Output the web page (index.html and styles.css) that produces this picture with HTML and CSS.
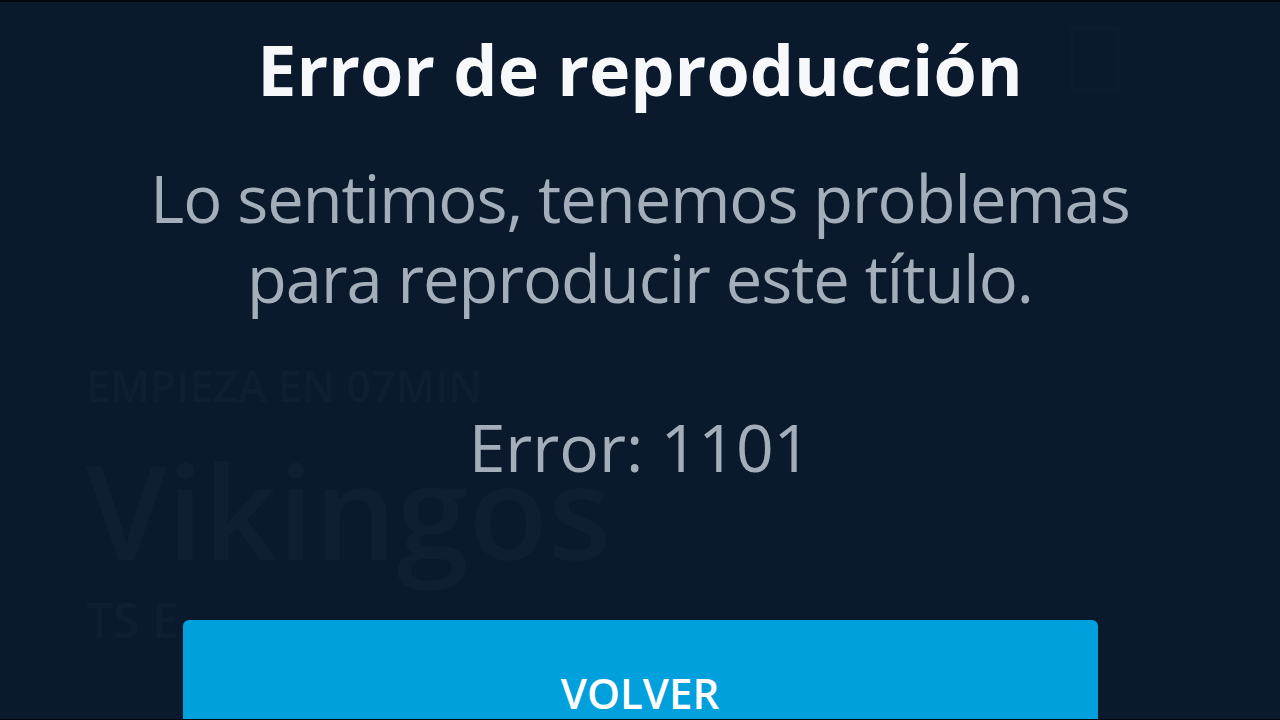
FILE: index.html
```html
<!DOCTYPE html>
<html lang="es">
<head>
    <meta charset="UTF-8">
    <meta name="viewport" content="width=device-width, initial-scale=1.0">
    <title>Error de reproducción</title>
    <link rel="stylesheet" href="styles.css">
</head>
<body>
    <div class="screen">
        <!-- detail page, dimmed behind the dialog -->
        <div class="backdrop">
            <div class="ghost-icon"></div>
            <div class="starts">EMPIEZA EN 07MIN</div>
            <div class="show-title">Vikingos</div>
            <div class="meta">TS E</div>
        </div>

        <div class="dialog">
            <h1 class="title">Error de reproducción</h1>
            <p class="message">Lo sentimos, tenemos problemas<br>para reproducir este título.</p>
            <p class="code">Error: 1101</p>
            <button class="back-btn">VOLVER</button>
        </div>
    </div>
</body>
</html>
```

FILE: styles.css
```css
* {
    box-sizing: border-box;
}

body {
    margin: 0;
    background-color: #000;
    font-family: "Open Sans", "Noto Sans", sans-serif;
}

.screen {
    position: relative;
    width: 1280px;
    height: 720px;
    overflow: hidden;
    background-color: #0a1a2c;
    border-top: 2px solid #03080e;
    border-bottom: 1px solid #03080e;
}

.backdrop {
    position: absolute;
    inset: 0;
    padding: 354px 0 0 86px;
    color: #0f1e30;
}

.ghost-icon {
    position: absolute;
    top: 24px;
    left: 1070px;
    width: 50px;
    height: 66px;
    border: 4px solid #0c1c2e;
    border-radius: 4px;
}

.starts {
    font-size: 43px;
    font-weight: 600;
    line-height: 60px;
}

.show-title {
    margin-top: 24px;
    font-size: 130px;
    font-weight: 600;
    line-height: 140px;
}

.meta {
    margin-top: 10px;
    font-size: 48px;
    font-weight: 600;
    line-height: 60px;
}

.dialog {
    position: relative;
    display: flex;
    flex-direction: column;
    align-items: center;
    padding-top: 22px;
    text-align: center;
}

.title {
    margin: 0;
    font-size: 70px;
    font-weight: 700;
    line-height: 90px;
    color: #f6f8fa;
}

.message {
    margin: 44px 0 0;
    font-size: 65px;
    line-height: 80px;
    letter-spacing: -1px;
    color: #a4aebb;
}

.code {
    margin: 88px 0 0;
    font-size: 66px;
    line-height: 80px;
    color: #a4aebb;
}

.back-btn {
    margin-top: 134px;
    width: 915px;
    padding: 44px 0 40px;
    border: none;
    border-radius: 6px;
    background-color: #00a0dc;
    color: #fff;
    font-family: inherit;
    font-size: 42px;
    font-weight: 600;
    text-align: center;
}
```
